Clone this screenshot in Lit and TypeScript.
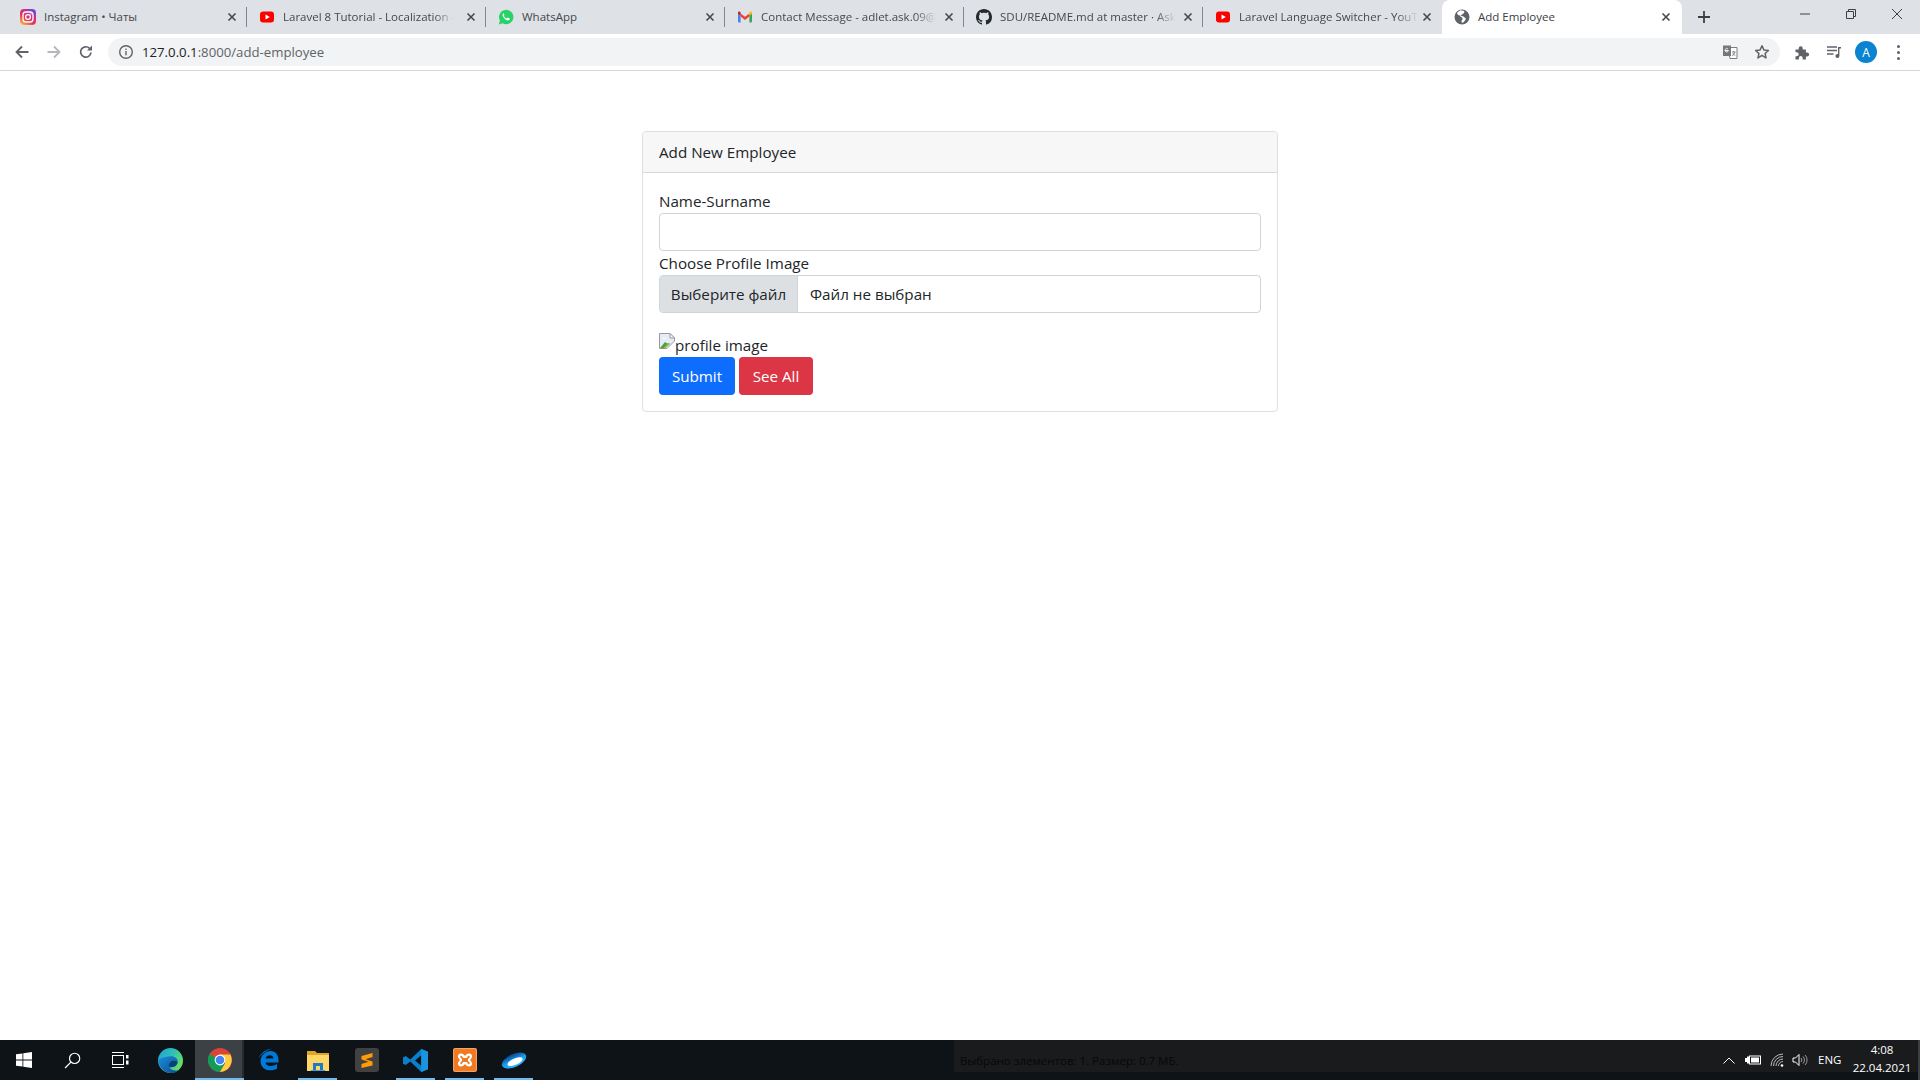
import { LitElement, html, css, svg } from "lit";
import { customElement } from "lit/decorators.js";

const yt = svg`<svg viewBox="0 0 16 16" width="16" height="16"><rect x="1" y="2.500" width="14" height="11" rx="3" fill="#f00"/><path d="M6.500 5.500v5l4.300-2.500z" fill="#fff"/></svg>`;
const favicons: Record<string, unknown> = {
  ig: svg`<svg viewBox="0 0 16 16" width="16" height="16"><defs><linearGradient id="ig" x1="0.1" y1="1" x2="0.8" y2="0"><stop offset="0" stop-color="#fdc04e"/><stop offset=".4" stop-color="#e8384f"/><stop offset=".75" stop-color="#c0309e"/><stop offset="1" stop-color="#5b51d8"/></linearGradient></defs><rect width="16" height="16" rx="4" fill="url(#ig)"/><rect x="3" y="3" width="10" height="10" rx="3" fill="none" stroke="#fff" stroke-width="1.300"/><circle cx="8" cy="8" r="2.400" fill="none" stroke="#fff" stroke-width="1.300"/><circle cx="11" cy="5" r=".7" fill="#fff"/></svg>`,
  yt,
  wa: svg`<svg viewBox="0 0 16 16" width="16" height="16"><path d="M.8 15.400l1.100-3.900A7.200 7.200 0 1 1 4.700 14.300z" fill="#25d366"/><path d="M5.800 4.200c-.3 0-.8.3-1 .8-.4 1-.2 2.300 1.200 4 1.400 1.700 2.900 2.500 4.100 2.500.8 0 1.500-.6 1.600-1.200.1-.4.1-.7 0-.8l-1.700-.9c-.2-.1-.3 0-.4.1l-.6.8c-.1.1-.3.1-.5 0-1.100-.5-2-1.300-2.600-2.400-.1-.2 0-.3.1-.4l.4-.6c.1-.1.1-.3 0-.4l-.7-1.600c-.1-.2-.2-.3-.4-.3z" fill="#fff"/></svg>`,
  gm: svg`<svg viewBox="0 0 16 16" width="16" height="16"><path d="M1 13.500V4l2.600 1.900v7.600H2a1 1 0 0 1-1-1z" fill="#4285f4"/><path d="M12.400 13.500V5.900L15 4v8.500a1 1 0 0 1-1 1z" fill="#34a853"/><path d="M3.600 7.600V4.400L8 7.700l4.400-3.300v3.200L8 10.900z" fill="#ea4335"/><path d="M1 5V3.800c0-1 1.200-1.600 2-1l.6.5v2.900z" fill="#c5221f"/><path d="M12.400 6.200V3.300l.6-.5c.8-.6 2 0 2 1V5z" fill="#fbbc04"/></svg>`,
  gh: svg`<svg viewBox="0 0 16 16" width="16" height="16"><path fill="#24292e" fill-rule="evenodd" d="M8 0C3.580 0 0 3.580 0 8c0 3.540 2.290 6.530 5.470 7.590.4.070.55-.17.55-.38 0-.19-.01-.82-.01-1.490-2.010.37-2.530-.49-2.690-.94-.09-.23-.48-.94-.82-1.130-.28-.15-.68-.52-.01-.53.63-.01 1.080.58 1.230.82.72 1.210 1.870.87 2.330.66.070-.52.28-.87.51-1.070-1.780-.2-3.640-.89-3.640-3.950 0-.87.31-1.590.82-2.150-.08-.2-.36-1.020.08-2.120 0 0 .67-.21 2.200.82.64-.18 1.320-.27 2-.27s1.360.09 2 .27c1.530-1.040 2.200-.82 2.200-.82.44 1.100.16 1.920.08 2.120.51.56.82 1.270.82 2.150 0 3.070-1.870 3.750-3.650 3.950.29.25.54.73.54 1.480 0 1.070-.01 1.930-.01 2.200 0 .21.15.46.55.38A8.010 8.010 0 0 0 16 8c0-4.420-3.580-8-8-8z"/></svg>`,
  globe: svg`<svg viewBox="0 0 16 16" width="16" height="16"><circle cx="8" cy="8" r="7.500" fill="#5f6368"/><path d="M6.500 1.200C4.800 2 3.400 3 3 4.500l1.500 1.700 1.700.3.5 1.500 1.600.6.2 1.900-1.200 1.500.7 1.700 1.200-.2 2.300-2.500.2-1.800-2.700-1.900-1.600-.2-.6-1 1.600-.6V5l1.700-.9.2-2z" fill="#fff"/></svg>`,
};

const tabs = [
  { t: "Instagram • Чаты", i: "ig" },
  { t: "Laravel 8 Tutorial - Localization -", i: "yt", cut: true },
  { t: "WhatsApp", i: "wa" },
  { t: "Contact Message - adlet.ask.09@", i: "gm", cut: true },
  { t: "SDU/README.md at master · Ask", i: "gh", cut: true },
  { t: "Laravel Language Switcher - YouT", i: "yt", cut: true },
  { t: "Add Employee", i: "globe", active: true },
];

const closeIcon = svg`<svg viewBox="0 0 10 10" width="10" height="10"><path d="M1.500 1.500l7 7M8.500 1.500l-7 7" stroke="#45484c" stroke-width="1.600"/></svg>`;

const tb = {
  back: svg`<svg viewBox="0 0 16 16" width="16" height="16"><path d="M14.500 8H2.500M8 2.500L2.500 8 8 13.500" fill="none" stroke="#5f6368" stroke-width="1.800"/></svg>`,
  fwd: svg`<svg viewBox="0 0 16 16" width="16" height="16"><path d="M1.500 8h12M8 2.500L13.500 8 8 13.500" fill="none" stroke="#b4b7bb" stroke-width="1.800"/></svg>`,
  reload: svg`<svg viewBox="0 0 16 16" width="16" height="16"><path d="M13 8.500a5.200 5.200 0 1 1-1.300-4" fill="none" stroke="#5f6368" stroke-width="1.700"/><path d="M14 1.500v5h-5z" fill="#5f6368"/></svg>`,
  info: svg`<svg viewBox="0 0 16 16" width="16" height="16"><circle cx="8" cy="8" r="6.300" fill="none" stroke="#5f6368" stroke-width="1.400"/><rect x="7.300" y="7" width="1.400" height="4.300" fill="#5f6368"/><rect x="7.300" y="4.600" width="1.400" height="1.400" fill="#5f6368"/></svg>`,
  translate: svg`<svg viewBox="0 0 16 16" width="16" height="16"><path d="M6 3.500h9v11H8z" fill="#fff" stroke="#7a7e82" stroke-width="1"/><rect x="1" y="1.500" width="8" height="10.500" fill="#74787c"/><path d="M3.200 6.500h3.200a1.700 1.700 0 1 1-.5-1.500" fill="none" stroke="#fff" stroke-width=".9"/><path d="M10 8h3.500M11.700 7v1M13 8c-.5 2-1.500 3-3 3.700M10.800 9c.4 1 1.200 2 2.500 2.500" fill="none" stroke="#6b6f73" stroke-width=".8"/></svg>`,
  star: svg`<svg viewBox="0 0 16 16" width="16" height="16"><path d="M8 1.800l1.900 4.100 4.500.5-3.300 3.100.9 4.500L8 11.300l-4 2.700.9-4.500L1.600 6.400l4.500-.5z" fill="none" stroke="#5f6368" stroke-width="1.500" stroke-linejoin="round"/></svg>`,
  puzzle: svg`<svg viewBox="0 0 16 16" width="16" height="16"><path d="M1.500 5.500h3.200V4.200a2 2 0 0 1 4 0v1.300h3.200v3.100h1.200a2 2 0 0 1 0 4h-1.200v2.900H8.700V14a1.900 1.900 0 0 0-3.800 0v1.500H1.500v-3.300h1.200a2 2 0 0 0 0-4H1.500z" fill="#5f6368"/></svg>`,
  media: svg`<svg viewBox="0 0 16 16" width="16" height="16"><path d="M1 3h10M1 6.500h10M1 10h6.500" stroke="#5f6368" stroke-width="1.400" fill="none"/><path d="M12 3h3v1.500h-1.600V12a2 2 0 1 1-1.400-1.900z" fill="#5f6368"/></svg>`,
};

const task = {
  win: svg`<svg viewBox="0 0 16 16" width="16" height="16"><path d="M0 2.300l6.500-.9v6.200H0zM7.300 1.300L16 0v7.600H7.300zM0 8.400h6.500v6.200L0 13.700zM7.300 8.400H16V16l-8.700-1.300z" fill="#fff"/></svg>`,
  search: svg`<svg viewBox="0 0 16 16" width="17" height="17"><circle cx="10" cy="6" r="4.800" fill="none" stroke="#fff" stroke-width="1.100"/><path d="M6.500 9.500L1 15" stroke="#fff" stroke-width="1.200"/></svg>`,
  view: svg`<svg viewBox="0 0 17 16" width="17" height="16"><path d="M0 .5h12M0 15.500h12" stroke="#fff"/><rect x=".5" y="3.500" width="11" height="9" fill="none" stroke="#fff"/><rect x="14" y="3" width="2.500" height="3.500" fill="#fff"/><rect x="14" y="8.500" width="2.500" height="4" fill="#fff"/></svg>`,
  edge: svg`<svg viewBox="0 0 24 24" width="25" height="25"><defs><linearGradient id="e1" x1="0" y1="0" x2="1" y2=".6"><stop offset="0" stop-color="#1e9fdc"/><stop offset=".55" stop-color="#2fc2b5"/><stop offset="1" stop-color="#6ee05e"/></linearGradient><linearGradient id="e2" x1="0" y1="0" x2="1" y2="1"><stop offset="0" stop-color="#1b8fd8"/><stop offset="1" stop-color="#0b4a94"/></linearGradient></defs><circle cx="12" cy="12" r="12" fill="url(#e1)"/><path d="M.2 11.500c.6 7 6 12.500 12.300 12.500 3 0 6-1 8-3-3.500 1.500-8 .5-9.500-2.500-1.500-3 .3-6 3.500-6.500 2-.3 3.500.5 4.500 1.500.2-3.500-3.500-6-7.500-5.500-4.500.5-9 1.500-11.300 3.500z" fill="url(#e2)"/><path d="M11 18.500c-1.500-3 .3-6 3.500-6.500 2-.3 3.500.5 4.500 1.500-.5 3-3 5-5.500 5-1 0-2-.1-2.500 0z" fill="#0a3f80"/></svg>`,
  chrome: svg`<svg viewBox="0 0 24 24" width="24" height="24"><circle cx="12" cy="12" r="12" fill="#db4437"/><path d="M12 12L1.600 6A12 12 0 0 0 12 24l5.200-9z" fill="#0f9d58"/><path d="M12 6.600h10.400A12 12 0 0 1 12 24l5.200-9z" fill="#ffcd40"/><circle cx="12" cy="12" r="5.400" fill="#fff"/><circle cx="12" cy="12" r="4.300" fill="#4285f4"/></svg>`,
  ie: svg`<svg viewBox="0 0 24 24" width="24" height="24"><path d="M3.500 12.500C4 7.500 8 3 13.500 3 19 3 22 7 21.500 14.500H8.500c.3 3.500 5.500 5 11.500 1.500v4.700c-7.500 3.500-16.500 1.500-16.500-8.200zM8.500 10.500h8c0-4.500-7.200-4.500-8 0z" fill="#0078d7"/><path d="M1.500 10C4 5 9 1 15 .8c-5 1.200-10 5-13.500 9.200z" fill="#0078d7"/></svg>`,
  folder: svg`<svg viewBox="0 0 24 24" width="24" height="24"><path d="M1 3h8l2 2h12v18H1z" fill="#e0a526"/><path d="M1 7h22v16H1z" fill="#ffd767"/><path d="M7 22v-7h10v7h-3v-4h-4v4z" fill="#1b7ac9"/><path d="M5 23h14v-1H5z" fill="#3ca5e6"/></svg>`,
  sublime: svg`<svg viewBox="0 0 24 24" width="24" height="24"><rect width="24" height="24" rx="3" fill="#414141"/><path d="M17.500 5v4L10.500 11.200l7 2.300v3.900L6.500 20v-4l7-2.200-7-2.300V8z" fill="#ff9c05"/></svg>`,
  vscode: svg`<svg viewBox="0 0 24 24" width="25" height="25"><path d="M17.500 1L24 3.500v17L17.500 23 7 13 2.600 16.400 0 15V9l2.600-1.400L7 11zM17.500 7l-6 5 6 5z" fill="#0b7fcc"/><path d="M17.500 1L24 3.500v17L17.500 23z" fill="#1b93de"/></svg>`,
  xampp: svg`<svg viewBox="0 0 24 24" width="24" height="24"><rect width="24" height="24" rx="2" fill="#ef7a22"/><rect x=".6" y=".6" width="22.800" height="22.800" rx="2" fill="none" stroke="#f7a76b" stroke-width="1"/><path d="M8 5.500c-2.500 0-3.500 2-3 3.500.3 1 1 2 2 3-1 1-1.700 2-2 3-.5 1.500.5 3.500 3 3.500 1.800 0 3-1 4-2.500 1 1.500 2.200 2.500 4 2.500 2.500 0 3.500-2 3-3.500-.3-1-1-2-2-3 1-1 1.700-2 2-3 .5-1.500-.5-3.500-3-3.500-1.800 0-3 1-4 2.500C11 6.500 9.800 5.500 8 5.500z" fill="#fff"/><path d="M7.500 8c1-.5 2 .5 2.500 2h4c.5-1.500 1.500-2.500 2.500-2 .7.500 0 2-1.500 3v2c1.500 1 2.200 2.500 1.500 3-1 .5-2-.5-2.500-2h-4c-.5 1.500-1.500 2.500-2.500 2-.7-.5 0-2 1.500-3v-2C7.500 10 6.800 8.500 7.500 8z" fill="#ef7a22"/></svg>`,
  swoosh: svg`<svg viewBox="0 0 24 24" width="26" height="26"><defs><linearGradient id="sw" x1="0" y1="0" x2="0" y2="1"><stop offset="0" stop-color="#0d3f8a"/><stop offset=".5" stop-color="#1a9cf0"/><stop offset="1" stop-color="#2fb5ff"/></linearGradient></defs><ellipse cx="12" cy="12.500" rx="12" ry="6" transform="rotate(-24 12 12.500)" fill="url(#sw)"/><ellipse cx="13" cy="13.500" rx="7.500" ry="3" transform="rotate(-24 13 13.500)" fill="#fff"/></svg>`,
};

@customElement("app-root")
export class AppRoot extends LitElement {
  static styles = css`
    :host { display: flex; flex-direction: column; height: 100vh; overflow: hidden; background: #fff; font-family: "Open Sans", "Noto Sans CJK SC", sans-serif; color: #212529; }
    .tabbar { display: flex; height: 34px; background: #dee1e6; padding-left: 8px; flex: none; }
    .tab { width: 239px; flex: none; display: flex; align-items: center; padding-left: 12px; box-sizing: border-box; position: relative; font-size: 11.5px; color: #45484c; }
    .tab::after { content: ""; position: absolute; right: 0; top: 7px; height: 20px; width: 1px; background: #80868b; }
    .tab.noline::after { display: none; }
    .tab.active { width: 240px; background: #fff; border-radius: 8px 8px 0 0; color: #3c4043; }
    .tab.active::after { display: none; }
    .fav { width: 16px; height: 16px; flex: none; display: flex; }
    .title { margin: -2px 0 0 8px; white-space: nowrap; }
    .title.cut { -webkit-mask-image: linear-gradient(90deg, #000 88%, transparent); mask-image: linear-gradient(90deg, #000 88%, transparent); }
    .close { display: flex; position: absolute; right: 10px; top: 12px; }
    .tab.active .close { right: 11px; }
    .plus { margin-left: 13px; width: 18px; height: 34px; display: flex; align-items: center; justify-content: center; }
    .winctl { margin-left: auto; display: flex; align-items: flex-start; }
    .wbtn { width: 46px; height: 28px; display: flex; align-items: center; justify-content: center; }

    .toolbar { display: flex; align-items: center; height: 36px; padding: 0 6px; border-bottom: 1px solid #d6d7d9; flex: none; }
    .tbtn { width: 32px; height: 28px; display: flex; align-items: center; justify-content: center; flex: none; }
    .omni { flex: 1; height: 28px; margin: 0 6px; background: #f1f3f4; border-radius: 14px; display: flex; align-items: center; padding-left: 8px; font-size: 13.2px; color: #5f6368; }
    .info { width: 20px; display: flex; justify-content: center; }
    .url { margin-left: 6px; }
    .url b { font-weight: 400; color: #202124; }
    .omni-right { margin-left: auto; display: flex; padding-right: 2px; }
    .avatar { width: 22px; height: 22px; border-radius: 50%; background: #0a84d0; color: #fff; font-size: 12px; display: flex; align-items: center; justify-content: center; }
    .dots { display: flex; flex-direction: column; gap: 3px; }
    .dots i { width: 3px; height: 3px; border-radius: 50%; background: #5f6368; display: block; }

    .page { flex: 1; padding-top: 60px; display: flex; justify-content: center; align-items: flex-start; }
    .card { width: 636px; border: 1px solid rgba(0,0,0,.125); border-radius: 4px; box-sizing: border-box; font-size: 15.2px; }
    .card-head { height: 40px; line-height: 40px; padding: 0 16px; background: #f7f7f7; border-bottom: 1px solid rgba(0,0,0,.125); border-radius: 3px 3px 0 0; }
    .card-body { padding: 16px; display: flex; flex-direction: column; }
    .lbl { height: 24px; line-height: 24px; }
    .input { height: 38px; border: 1px solid #ced4da; border-radius: 4px; box-sizing: border-box; background: #fff; }
    .file { display: flex; align-items: stretch; line-height: 36px; overflow: hidden; }
    .file-btn { width: 138px; box-sizing: border-box; background: #dde0e3; border-right: 1px solid #ced4da; text-align: center; }
    .file-name { padding-left: 12px; }
    .imgrow { margin-top: 20px; height: 24px; display: flex; line-height: 24px; }
    .imgrow svg { flex: none; }
    .btns { display: flex; gap: 4px; }
    .btn { height: 38px; border-radius: 4px; color: #fff; display: flex; align-items: center; justify-content: center; }
    .submit { width: 76px; background: #0d6efd; }
    .seeall { width: 74px; background: #dc3545; }

    .taskbar { height: 40px; flex: none; background: #0d1317; display: flex; align-items: flex-start; color: #fff; }
    .tcell { width: 48px; height: 40px; flex: none; display: flex; align-items: center; justify-content: center; position: relative; box-sizing: border-box; }
    .tcell.app { width: 49px; }
    .tcell.first { margin-left: 2px; }
    .tcell.on::after { content: ""; position: absolute; left: 5px; right: 5px; bottom: 0; height: 2px; background: #76b9ed; }
    .tcell.cur { background: #3b4145; border-right: 2px solid #262b2e; padding-left: 2px; }
    .tcell.cur::after { content: ""; position: absolute; left: 0; right: -2px; bottom: 0; height: 2px; background: #76b9ed; }
    .status { flex: 1; margin-left: 416px; height: 32px; background: #1a1b1d; box-sizing: border-box; padding: 13px 0 0 6px; line-height: 16px; font-size: 11.5px; color: #080808; }
    .tray { width: 240px; height: 32px; flex: none; background: #1a1b1d; position: relative; display: flex; align-items: center; padding: 8px 0 0 37px; box-sizing: border-box; font-size: 11.5px; }
    .ticon { display: flex; justify-content: center; flex: none; width: 24px; }
    .ticon.n { width: 22px; }
    .eng { margin-left: 7px; width: 32px; flex: none; margin-top: -1px; }
    .clock { position: absolute; right: 8px; top: 1px; width: 60px; text-align: center; line-height: 18px; font-size: 11.5px; }
    .showdesk { position: absolute; right: 0; top: 0; width: 2px; height: 40px; background: #3d4043; }
  `;

  render() {
    return html`
      <div class="tabbar">
        ${tabs.map((t, i) => html`
          <div class="tab ${t.active ? "active" : ""} ${i === 5 ? "noline" : ""}">
            <span class="fav">${favicons[t.i]}</span>
            <span class="title ${t.cut ? "cut" : ""}">${t.t}</span>
            <span class="close">${closeIcon}</span>
          </div>`)}
        <div class="plus"><svg viewBox="0 0 12 12" width="12" height="12"><path d="M6 0v12M0 6h12" stroke="#3c4043" stroke-width="1.800"/></svg></div>
        <div class="winctl">
          <div class="wbtn"><svg viewBox="0 0 10 10" width="10" height="10"><path d="M0 5h10" stroke="#3c4043"/></svg></div>
          <div class="wbtn"><svg viewBox="0 0 10 10" width="10" height="10"><path d="M2.500 2.500V.5h7v7h-2M.5 2.500h7v7h-7z" fill="none" stroke="#3c4043"/></svg></div>
          <div class="wbtn"><svg viewBox="0 0 10 10" width="10" height="10"><path d="M0 0l10 10M10 0L0 10" stroke="#3c4043"/></svg></div>
        </div>
      </div>
      <div class="toolbar">
        <div class="tbtn">${tb.back}</div>
        <div class="tbtn">${tb.fwd}</div>
        <div class="tbtn">${tb.reload}</div>
        <div class="omni">
          <span class="info">${tb.info}</span>
          <span class="url"><b>127.0.0.1</b>:8000/add-employee</span>
          <span class="omni-right">
            <span class="tbtn">${tb.translate}</span>
            <span class="tbtn">${tb.star}</span>
          </span>
        </div>
        <div class="tbtn">${tb.puzzle}</div>
        <div class="tbtn">${tb.media}</div>
        <div class="tbtn"><span class="avatar">A</span></div>
        <div class="tbtn"><span class="dots"><i></i><i></i><i></i></span></div>
      </div>
      <main class="page">
        <section class="card">
          <div class="card-head">Add New Employee</div>
          <div class="card-body">
            <div class="lbl">Name-Surname</div>
            <div class="input"></div>
            <div class="lbl">Choose Profile Image</div>
            <div class="input file">
              <div class="file-btn">Выберите файл</div>
              <div class="file-name">Файл не выбран</div>
            </div>
            <div class="imgrow">
              <svg viewBox="0 0 16 16" width="16" height="16"><path d="M.5.5h10.500l4.500 4.500v3L8 15.500H.5z" fill="#e4ecf8" stroke="#9a9a9a"/><path d="M11 .5V5h4.500z" fill="#fff" stroke="#9a9a9a"/><path d="M3 6c1-1.500 3-1.500 4 0H3z" fill="#fff"/><path d="M1 15l5-6 3 2-4.500 4.500z" fill="#5a9e32"/><path d="M5 15l3.500-5 3 .5-5 4.500z" fill="#7cbc4c"/></svg>
              <span>profile image</span>
            </div>
            <div class="btns">
              <div class="btn submit">Submit</div>
              <div class="btn seeall">See All</div>
            </div>
          </div>
        </section>
      </main>
      <footer class="taskbar">
        <div class="tcell">${task.win}</div>
        <div class="tcell">${task.search}</div>
        <div class="tcell">${task.view}</div>
        <div class="tcell app first">${task.edge}</div>
        <div class="tcell app cur">${task.chrome}</div>
        <div class="tcell app">${task.ie}</div>
        <div class="tcell app on">${task.folder}</div>
        <div class="tcell app">${task.sublime}</div>
        <div class="tcell app on">${task.vscode}</div>
        <div class="tcell app on">${task.xampp}</div>
        <div class="tcell app on">${task.swoosh}</div>
        <div class="status">Выбрано элементов: 1. Размер: 0.7 МБ.</div>
        <div class="tray">
          <span class="ticon"><svg viewBox="0 0 12 7" width="12" height="7"><path d="M.5 6.500L6 1l5.500 5.500" fill="none" stroke="#fff"/></svg></span>
          <span class="ticon"><svg viewBox="0 0 16 10" width="16" height="10"><path d="M0 3h2v4H0zM2 1.500h2v7H2z" fill="#fff"/><rect x="4.500" y="1" width="11" height="8" fill="none" stroke="#fff"/><rect x="6" y="2.500" width="8" height="5" fill="#fff"/></svg></span>
          <span class="ticon"><svg viewBox="0 0 14 14" width="14" height="14"><path d="M1 13A12 12 0 0 1 13 1M3.500 13A9.500 9.500 0 0 1 13 3.500M6 13a7 7 0 0 1 7-7M8.500 13A4.500 4.500 0 0 1 13 8.500" fill="none" stroke="#bbb"/><circle cx="12" cy="12.500" r="1.300" fill="#fff"/></svg></span>
          <span class="ticon n"><svg viewBox="0 0 16 14" width="16" height="14"><path d="M1 5h2.500L7 1.500v11L3.500 9H1z" fill="none" stroke="#fff"/><path d="M9 5a3 3 0 0 1 0 4M11 3.500a5 5 0 0 1 0 7M13 2a7 7 0 0 1 0 10" fill="none" stroke="#999"/></svg></span>
          <span class="eng">ENG</span>
          <div class="clock">4:08<br />22.04.2021</div>
          <div class="showdesk"></div>
        </div>
      </footer>
    `;
  }
}
